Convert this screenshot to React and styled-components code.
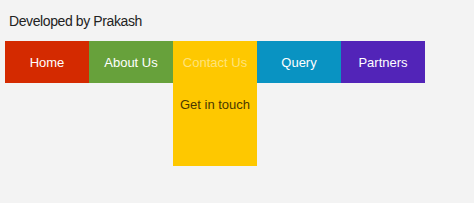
import React from "react";
import styled, { createGlobalStyle } from "styled-components";

const Global = createGlobalStyle`
  html, body { margin: 0; padding: 0; background: #f3f3f3; }
  body { font-family: "Liberation Sans", Arial, sans-serif; }
`;

const Page = styled.div`
  width: 474px;
  height: 203px;
  padding: 13px 5px 0;
  box-sizing: border-box;
  background: #f3f3f3;
`;

const Title = styled.div`
  font-size: 14px;
  letter-spacing: -0.4px;
  line-height: 16px;
  color: #222;
  padding-left: 4px;
  margin-bottom: 12px;
`;

const Nav = styled.ul`
  display: flex;
  list-style: none;
  margin: 0;
  padding: 0;
`;

const Item = styled.li`
  position: relative;
  width: 84px;
  height: 42px;
  box-sizing: border-box;
  padding-top: 1px;
  line-height: 41px;
  text-align: center;
  font-size: 13px;
  background: ${(p) => p.$bg};
  color: ${(p) => p.$fg || "#fff"};
`;

const Dropdown = styled.div`
  position: absolute;
  top: 42px;
  left: 0;
  width: 84px;
  height: 83px;
  box-sizing: border-box;
  padding-top: 1px;
  background: #fec800;
  color: #4a3800;
  line-height: 41px;
  text-align: center;
`;

const items = [
  { label: "Home", bg: "#d42a00" },
  { label: "About Us", bg: "#67a13b" },
  { label: "Contact Us", bg: "#fec800", fg: "#ffe37a", sub: "Get in touch" },
  { label: "Query", bg: "#0993c2" },
  { label: "Partners", bg: "#5224b8" },
];

export default function App() {
  return (
    <Page>
      <Global />
      <Title>Developed by Prakash</Title>
      <Nav>
        {items.map((it) => (
          <Item key={it.label} $bg={it.bg} $fg={it.fg}>
            {it.label}
            {it.sub && <Dropdown>{it.sub}</Dropdown>}
          </Item>
        ))}
      </Nav>
    </Page>
  );
}
